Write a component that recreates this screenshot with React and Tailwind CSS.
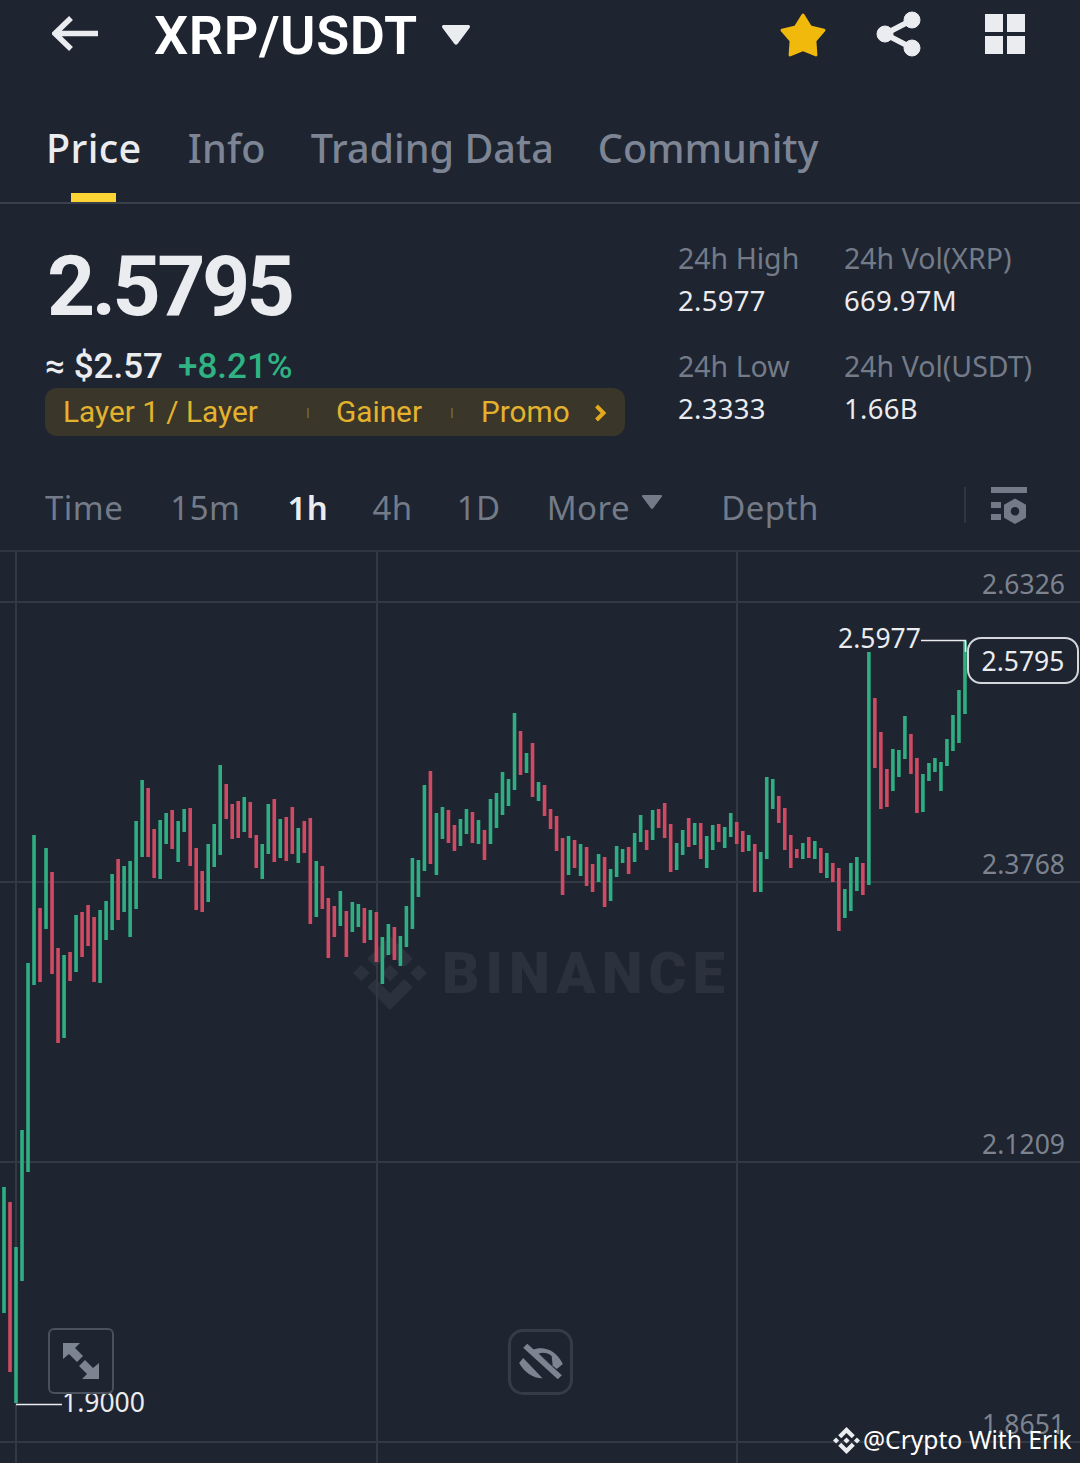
const candles = [
  [1187, 1313, "g"], [1202, 1372, "r"], [1247, 1403, "g"], [1130, 1281, "g"], [963, 1172, "g"], [835, 985, "g"],
  [908, 982, "r"], [848, 929, "g"], [872, 974, "r"], [948, 1043, "r"], [955, 1038, "g"], [952, 981, "r"],
  [915, 972, "g"], [912, 957, "r"], [905, 946, "r"], [917, 982, "r"], [910, 983, "g"], [901, 940, "g"],
  [874, 930, "g"], [859, 920, "r"], [866, 912, "g"], [861, 937, "g"], [821, 909, "g"], [780, 857, "g"],
  [788, 857, "r"], [829, 878, "r"], [820, 879, "g"], [813, 844, "g"], [810, 849, "r"], [821, 862, "g"],
  [809, 832, "g"], [808, 866, "r"], [848, 910, "r"], [871, 912, "r"], [844, 902, "g"], [824, 867, "g"],
  [765, 855, "g"], [784, 819, "r"], [804, 839, "r"], [801, 838, "r"], [797, 832, "g"], [802, 838, "r"],
  [835, 868, "r"], [844, 879, "g"], [804, 854, "g"], [799, 862, "r"], [819, 858, "g"], [817, 861, "r"],
  [807, 854, "r"], [828, 863, "g"], [821, 853, "r"], [818, 924, "r"], [861, 917, "g"], [866, 909, "r"],
  [898, 958, "r"], [906, 937, "r"], [891, 926, "g"], [911, 957, "r"], [902, 932, "g"], [904, 927, "g"],
  [908, 943, "r"], [910, 940, "g"], [912, 962, "r"], [937, 984, "g"], [924, 955, "g"], [927, 960, "r"],
  [936, 966, "g"], [906, 947, "g"], [858, 929, "g"], [860, 897, "g"], [785, 871, "g"], [771, 864, "r"],
  [813, 875, "g"], [807, 839, "g"], [810, 843, "r"], [825, 851, "r"], [819, 846, "g"], [809, 834, "g"],
  [812, 843, "r"], [820, 844, "g"], [830, 860, "r"], [799, 844, "g"], [793, 828, "g"], [772, 815, "g"],
  [779, 806, "g"], [713, 790, "g"], [731, 775, "r"], [753, 773, "g"], [743, 797, "r"], [782, 801, "g"],
  [785, 816, "r"], [809, 829, "r"], [816, 851, "r"], [838, 895, "r"], [836, 875, "g"], [840, 868, "r"],
  [844, 876, "g"], [847, 886, "r"], [864, 892, "r"], [854, 882, "g"], [857, 907, "r"], [869, 901, "g"],
  [846, 877, "g"], [849, 863, "g"], [847, 874, "r"], [833, 862, "g"], [815, 842, "g"], [830, 850, "r"],
  [810, 840, "g"], [809, 828, "r"], [803, 838, "r"], [824, 872, "r"], [843, 870, "g"], [830, 855, "g"],
  [818, 847, "r"], [823, 845, "g"], [823, 859, "r"], [836, 868, "g"], [825, 850, "g"], [824, 842, "r"],
  [827, 848, "g"], [813, 837, "g"], [822, 844, "r"], [831, 852, "r"], [835, 851, "g"], [844, 892, "r"],
  [852, 892, "g"], [777, 859, "g"], [779, 809, "g"], [796, 823, "r"], [808, 850, "r"], [835, 868, "r"],
  [849, 858, "r"], [843, 859, "g"], [837, 858, "r"], [841, 859, "g"], [848, 873, "r"], [853, 878, "g"],
  [863, 882, "r"], [868, 931, "r"], [889, 918, "g"], [863, 911, "g"], [857, 891, "g"], [863, 895, "r"],
  [652, 885, "g"], [698, 768, "r"], [732, 809, "r"], [769, 807, "r"], [749, 791, "g"], [750, 777, "g"],
  [716, 759, "g"], [734, 774, "r"], [758, 813, "r"], [774, 812, "g"], [763, 781, "g"], [758, 772, "g"],
  [762, 791, "g"], [739, 766, "g"], [715, 751, "g"], [690, 743, "g"], [641, 714, "g"],
];

function BinanceLogo({ className, fill }) {
  return (
    <svg viewBox="0 0 126.61 126.61" className={className} fill={fill}>
      <path d="M38.73 53.2l24.59-24.58 24.6 24.6 14.3-14.31L63.32 0 24.43 38.9z" />
      <path d="M0 63.31l14.3-14.31 14.31 14.31-14.31 14.3z" />
      <path d="M38.73 73.41l24.59 24.59 24.6-24.6 14.31 14.29-38.91 38.92-38.9-38.9z" />
      <path d="M98 63.31l14.3-14.31 14.31 14.3-14.31 14.32z" />
      <path d="M77.83 63.3L63.32 48.78 48.81 63.28l14.51 14.5z" />
    </svg>
  );
}

function AxisLabel({ top, children }) {
  return (
    <div className="absolute right-[15px] text-[26.5px] leading-[36px] text-[#7d838e]" style={{ top }}>
      {children}
    </div>
  );
}

function Stat({ label, value }) {
  return (
    <div>
      <div className="whitespace-nowrap text-[28.5px] leading-[40px] text-[#747b88]">{label}</div>
      <div className="mt-[3px] text-[27.5px] leading-[40px] tracking-[0.3px] text-[#eaecef]">{value}</div>
    </div>
  );
}

export default function App() {
  return (
    <div className="h-[1463px] w-[1080px] overflow-hidden bg-[#1e2430] font-['Noto_Sans',sans-serif]">
      {/* Top bar */}
      <div className="flex h-[68px] items-center pl-[52px] pr-[55px]">
        <svg width="46" height="36" viewBox="0 0 46 36" fill="none" stroke="#eaecef" strokeWidth="5.5">
          <path d="M46 17.5H4M19 2L3 17.5 19 33" />
        </svg>
        <div className="ml-[56px] mt-[4px] font-['Roboto',sans-serif] text-[54px] font-semibold leading-[68px] tracking-[0.6px] text-white">
          XRP/USDT
        </div>
        <svg width="28" height="20" viewBox="0 0 28 20" className="ml-[24px] mt-[2px]" fill="#eaecef">
          <path d="M2 0h24c2 0 2.500 1.500 1.500 3L15.500 19c-.8 1-2.200 1-3 0L.5 3C-.5 1.500 0 0 2 0z" />
        </svg>
        <div className="ml-auto flex items-center">
          <svg width="46" height="46" viewBox="0 0 46 46" fill="#f0b90b" stroke="#f0b90b" strokeWidth="3" strokeLinejoin="round" className="mt-[2px]">
            <path d="M23 3l7.300 11.900 13.600 3.300-9 10.700 1 14-12.900-5.300-12.900 5.300 1-14-9-10.700 13.600-3.300z" />
          </svg>
          <svg width="46" height="48" viewBox="0 0 46 48" fill="#eaecef" stroke="#eaecef" className="ml-[50px]">
            <path d="M9 24L36 10M9 24l27 14" strokeWidth="5.500" fill="none" />
            <circle cx="9" cy="24" r="8" />
            <circle cx="36" cy="10" r="8" />
            <circle cx="36" cy="38" r="8" />
          </svg>
          <svg width="40" height="40" viewBox="0 0 40 40" fill="#eaecef" className="ml-[63px]">
            <rect x="0" y="0" width="18" height="18" />
            <rect x="22" y="0" width="18" height="18" />
            <rect x="0" y="22" width="18" height="18" />
            <rect x="22" y="22" width="18" height="18" />
          </svg>
        </div>
      </div>

      {/* Tabs */}
      <div className="flex h-[136px] items-end border-b-[2px] border-[#3a404b] pl-[46px] text-[39.6px] font-medium leading-[52px] text-[#7d8594]">
        <div className="flex flex-col items-center">
          <span className="tracking-[0.4px] text-[#eaecef]">Price</span>
          <span className="mt-[19px] h-[9px] w-[45px] bg-[#fcd535]" />
        </div>
        <div className="mb-[28px] ml-[46px] tracking-[0.2px]">Info</div>
        <div className="mb-[28px] ml-[45px]">Trading Data</div>
        <div className="mb-[28px] ml-[44px]">Community</div>
      </div>

      {/* Price summary */}
      <div className="flex h-[266px]">
        <div className="w-[633px] pl-[45px] pt-[38px] font-['Roboto',sans-serif]">
          <div className="pl-[2px] text-[84px] font-bold leading-[90px] tracking-[-3.5px] text-[#eaecef]">2.5795</div>
          <div className="mt-[13px] flex items-center text-[35px] font-medium leading-[43px]">
            <span className="text-[#eaecef]">≈ $2.57</span>
            <span className="ml-[15px] text-[#2fb383]">+8.21%</span>
          </div>
          <div className="flex h-[48px] w-[580px] items-center rounded-[12px] bg-[#3a3629] pl-[18px] pt-[1px] text-[29.8px] text-[#e3b22e]">
            <span>Layer 1 / Layer</span>
            <span className="ml-[49px] h-[10px] w-[2px] bg-[#6b5a2a]" />
            <span className="ml-[27px]">Gainer</span>
            <span className="ml-[29px] h-[10px] w-[2px] bg-[#6b5a2a]" />
            <span className="ml-[28px]">Promo</span>
            <svg width="14" height="18" viewBox="0 0 14 18" fill="none" stroke="#e3a81e" strokeWidth="4" className="ml-[24px]">
              <path d="M2.500 2l7 7-7 7" />
            </svg>
          </div>
        </div>
        <div className="grid grid-cols-[166px_1fr] content-start gap-y-[25px] pl-[45px] pt-[34px]">
          <Stat label="24h High" value="2.5977" />
          <Stat label="24h Vol(XRP)" value="669.97M" />
          <Stat label="24h Low" value="2.3333" />
          <Stat label="24h Vol(USDT)" value="1.66B" />
        </div>
      </div>

      {/* Interval row */}
      <div className="flex h-[82px] items-start border-b-[2px] border-[#30363f] pl-[45px] pr-[53px] pt-[15px] text-[33px] leading-[46px] tracking-[0.5px] text-[#747b88]">
        <span>Time</span>
        <span className="ml-[47px]">15m</span>
        <span className="ml-[47px] font-semibold text-[#eaecef]">1h</span>
        <span className="ml-[44px]">4h</span>
        <span className="ml-[44px]">1D</span>
        <span className="ml-[46px]">More</span>
        <svg width="20" height="14" viewBox="0 0 20 14" fill="#747b88" className="ml-[12px] mt-[10px]">
          <path d="M1 0h18c1 0 1.500 1 .800 1.800L11 13.500c-.5.600-1.500.600-2 0L.2 1.800C-.5 1 0 0 1 0z" />
        </svg>
        <span className="ml-[59px]">Depth</span>
        <div className="ml-auto mt-[2px] flex items-start">
          <span className="h-[36px] w-[2px] bg-[#30363f]" />
          <svg width="36" height="38" viewBox="0 0 36 38" fill="#747b88" className="ml-[25px]">
            <rect x="0" y="0" width="36" height="6" />
            <rect x="0" y="15" width="10" height="6" />
            <rect x="0" y="27" width="10" height="6" />
            <path fillRule="evenodd" d="M24 11.500l11 6.200v13L24 37l-11-6.300v-13zM24 20a4.300 4.300 0 100 8.600 4.300 4.300 0 000-8.600z" />
          </svg>
        </div>
      </div>

      {/* Chart */}
      <div className="relative h-[911px]">
        {/* Watermark sits under the candles */}
        <div className="absolute left-[353px] top-[384px] flex items-center">
          <BinanceLogo className="h-[74px] w-[74px]" fill="#2c323d" />
          <span className="ml-[15px] font-['Roboto',sans-serif] text-[58px] font-black leading-[74px] tracking-[6px] text-[#2c323d]">
            BINANCE
          </span>
        </div>

        <svg viewBox="0 552 1080 911" className="absolute inset-0 h-full w-full">
          {[602, 882, 1162, 1442].map((y) => (
            <rect key={y} x="0" y={y - 1} width="1080" height="2" fill="#333944" />
          ))}
          {[16, 377, 737].map((x) => (
            <rect key={x} x={x - 1} y="552" width="2" height="911" fill="#333944" />
          ))}
          {candles.map(([top, bottom, c], i) => (
            <rect
              key={i}
              x={4 + i * 6.006 - 1.8}
              y={top}
              width="3.600"
              height={bottom - top}
              fill={c === "g" ? "#2fae82" : "#cf4b63"}
            />
          ))}
          <path d="M921 640.500H965.500V652M16 1404.500H62" fill="none" stroke="#eaecef" strokeWidth="1.500" />
        </svg>

        <AxisLabel top={14}>2.6326</AxisLabel>
        <AxisLabel top={294}>2.3768</AxisLabel>
        <AxisLabel top={574}>2.1209</AxisLabel>
        <AxisLabel top={854}>1.8651</AxisLabel>

        <div className="absolute left-[838px] top-[68px] text-[26.5px] leading-[36px] text-[#eaecef]">2.5977</div>
        <div className="absolute left-[967px] top-[85px] flex h-[47px] w-[112px] items-center justify-center rounded-[14px] border-2 border-[#d3d6da] pt-[2px] text-[26.5px] text-[#eaecef]">
          2.5795
        </div>
        <div className="absolute left-[62px] top-[832px] text-[26.5px] leading-[36px] text-[#eaecef]">1.9000</div>

        {/* Expand button */}
        <div className="absolute left-[48px] top-[776px] flex h-[66px] w-[66px] items-center justify-center rounded-[6px] border-2 border-[#4a505c]">
          <svg width="38" height="38" viewBox="0 0 38 38" fill="#7d8491">
            <path d="M1 1h17l-5 5 8 8-6 6-8-8-6 5z" />
            <path d="M37 37H20l5-5-8-8 6-6 8 8 6-5z" />
          </svg>
        </div>

        {/* Hide button */}
        <div className="absolute left-[508px] top-[777px] h-[66px] w-[65px] rounded-[15px] border-[3px] border-[#363c47]">
          <svg viewBox="31 22 58 58" className="h-full w-full" fill="#7d8491">
            <path d="M47 33l-4 4 34 31 4-4z" />
            <path fillRule="evenodd" d="M52 39C62 35 75 38 82 53l-6 5zM58 43l14 12-1-10c-4-3-9-4-13-2z" />
            <path d="M39 52l4-5 19 20c-10 0-18-6-23-15z" />
          </svg>
        </div>

        {/* Credit */}
        <div className="absolute left-[833px] top-[873px] flex items-center whitespace-nowrap">
          <BinanceLogo className="h-[27px] w-[27px]" fill="#eaecef" />
          <span className="ml-[3px] text-[24.6px] leading-[30px] text-white">@Crypto With Erik</span>
        </div>
      </div>
    </div>
  );
}
